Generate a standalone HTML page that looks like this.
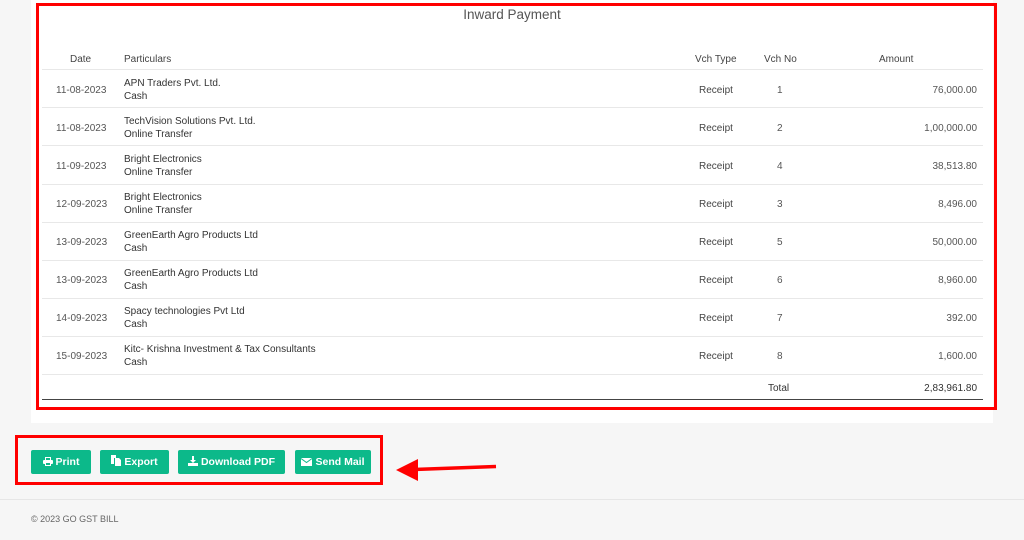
<!DOCTYPE html>
<html><head><style>
*{margin:0;padding:0;box-sizing:border-box}
body{width:1024px;height:538px;background:#f6f6f6;font-family:"Liberation Sans",sans-serif;position:relative;overflow:hidden;color:#555}
.card{position:absolute;left:31px;top:0;width:962px;height:423px;background:#fff}
.red{position:absolute;border:3px solid #f00}
.t{position:absolute;font-size:10px;white-space:nowrap;line-height:12.5px}
.line{position:absolute;left:42px;width:941px;height:1px;background:#e8e8e8}
.btn{position:absolute;top:450px;height:24px;background:#0cb98a;color:#fff;font-size:10.5px;font-weight:bold;line-height:24px;text-align:center;border-radius:2px}
.btn svg{vertical-align:-1px;margin-right:3px}
.s{position:absolute;left:0;top:2px;width:1024px;height:538px}
</style></head><body>
<div class="card"></div>
<div class="red" style="left:36px;top:3px;width:961px;height:407px"></div>
<div class="t" style="left:0;width:1024px;text-align:center;top:7px;font-size:13.5px;line-height:16px;color:#555">Inward Payment</div>

<div class="line" style="top:69px"></div>
<div class="line" style="top:107px"></div>
<div class="line" style="top:145px"></div>
<div class="line" style="top:184px"></div>
<div class="line" style="top:222px"></div>
<div class="line" style="top:260px"></div>
<div class="line" style="top:298px"></div>
<div class="line" style="top:336px"></div>
<div class="line" style="top:374px"></div>
<div style="position:absolute;left:42px;top:399px;width:941px;height:1px;background:#444"></div>

<div class="s">
<div class="t" style="left:70px;top:52px;color:#444">Date</div>
<div class="t" style="left:124px;top:52px;color:#444">Particulars</div>
<div class="t" style="left:695px;top:52px;color:#444">Vch Type</div>
<div class="t" style="left:764px;top:52px;color:#444">Vch No</div>
<div class="t" style="left:879px;top:52px;color:#444">Amount</div>

<div class="t" style="left:56px;top:83px">11-08-2023</div><div class="t" style="left:124px;top:76px;color:#333">APN Traders Pvt. Ltd.<br>Cash</div><div class="t" style="left:699px;top:83px;color:#444">Receipt</div><div class="t" style="left:777px;top:83px">1</div><div class="t" style="right:47px;top:83px">76,000.00</div>
<div class="t" style="left:56px;top:121px">11-08-2023</div><div class="t" style="left:124px;top:114px;color:#333">TechVision Solutions Pvt. Ltd.<br>Online Transfer</div><div class="t" style="left:699px;top:121px;color:#444">Receipt</div><div class="t" style="left:777px;top:121px">2</div><div class="t" style="right:47px;top:121px">1,00,000.00</div>
<div class="t" style="left:56px;top:159px">11-09-2023</div><div class="t" style="left:124px;top:152px;color:#333">Bright Electronics<br>Online Transfer</div><div class="t" style="left:699px;top:159px;color:#444">Receipt</div><div class="t" style="left:777px;top:159px">4</div><div class="t" style="right:47px;top:159px">38,513.80</div>
<div class="t" style="left:56px;top:197px">12-09-2023</div><div class="t" style="left:124px;top:190px;color:#333">Bright Electronics<br>Online Transfer</div><div class="t" style="left:699px;top:197px;color:#444">Receipt</div><div class="t" style="left:777px;top:197px">3</div><div class="t" style="right:47px;top:197px">8,496.00</div>
<div class="t" style="left:56px;top:235px">13-09-2023</div><div class="t" style="left:124px;top:228px;color:#333">GreenEarth Agro Products Ltd<br>Cash</div><div class="t" style="left:699px;top:235px;color:#444">Receipt</div><div class="t" style="left:777px;top:235px">5</div><div class="t" style="right:47px;top:235px">50,000.00</div>
<div class="t" style="left:56px;top:273px">13-09-2023</div><div class="t" style="left:124px;top:266px;color:#333">GreenEarth Agro Products Ltd<br>Cash</div><div class="t" style="left:699px;top:273px;color:#444">Receipt</div><div class="t" style="left:777px;top:273px">6</div><div class="t" style="right:47px;top:273px">8,960.00</div>
<div class="t" style="left:56px;top:311px">14-09-2023</div><div class="t" style="left:124px;top:304px;color:#333">Spacy technologies Pvt Ltd<br>Cash</div><div class="t" style="left:699px;top:311px;color:#444">Receipt</div><div class="t" style="left:777px;top:311px">7</div><div class="t" style="right:47px;top:311px">392.00</div>
<div class="t" style="left:56px;top:349px">15-09-2023</div><div class="t" style="left:124px;top:342px;color:#333">Kitc- Krishna Investment &amp; Tax Consultants<br>Cash</div><div class="t" style="left:699px;top:349px;color:#444">Receipt</div><div class="t" style="left:777px;top:349px">8</div><div class="t" style="right:47px;top:349px">1,600.00</div>
<div class="t" style="left:768px;top:381px;color:#333">Total</div><div class="t" style="right:47px;top:381px;color:#333">2,83,961.80</div>
</div>

<div class="red" style="left:15px;top:435px;width:368px;height:50px"></div>
<div class="btn" style="left:31px;width:60px"><svg width="10" height="9" viewBox="0 0 10 9"><rect x="2.5" y="0.5" width="5" height="3" fill="none" stroke="#fff"/><rect x="0" y="3" width="10" height="4" rx="1" fill="#fff"/><rect x="2.5" y="5.5" width="5" height="3" fill="#0cb98a" stroke="#fff"/></svg>Print</div>
<div class="btn" style="left:100px;width:69px"><svg width="10" height="11" viewBox="0 0 10 11"><path d="M0 0h5v3H3v6H0z" fill="#fff"/><path d="M4 3h4l2 2v6H4z" fill="#fff"/></svg>Export</div>
<div class="btn" style="left:178px;width:107px"><svg width="10" height="10" viewBox="0 0 10 10"><path d="M4 0h2v4h2L5 7 2 4h2z" fill="#fff"/><rect x="0" y="7" width="10" height="3" fill="#fff"/></svg>Download PDF</div>
<div class="btn" style="left:295px;width:76px"><svg width="11" height="8" viewBox="0 0 11 8"><rect width="11" height="8" fill="#fff"/><path d="M0 0.5L5.5 4.5 11 0.5" stroke="#0cb98a" fill="none"/></svg>Send Mail</div>

<svg style="position:absolute;left:394px;top:455px" width="106" height="30"><path d="M2 15 L24 4 L24 26 Z" fill="#f00"/><path d="M20 14.5 L102 11.5" stroke="#f00" stroke-width="3.5"/></svg>

<div style="position:absolute;left:0;top:499px;width:1024px;height:1px;background:#e6e6e6"></div>
<div class="t" style="left:31px;top:513px;font-size:9px;color:#666">© 2023 GO GST BILL</div>
</body></html>
